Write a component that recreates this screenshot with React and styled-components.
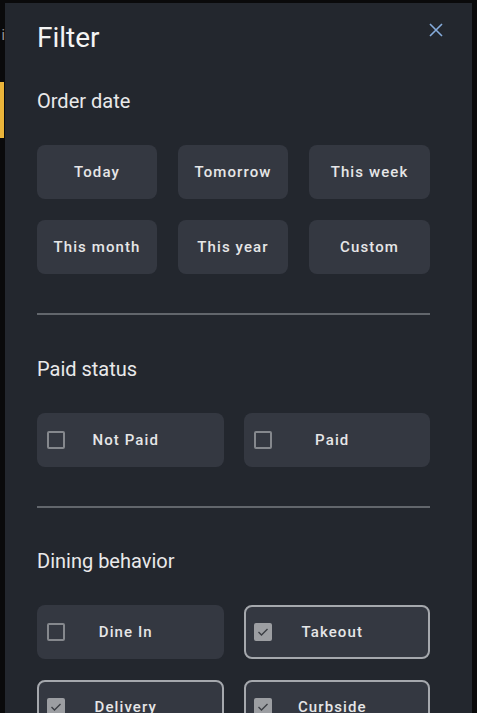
import React from "react";
import styled, { createGlobalStyle } from "styled-components";

const GlobalStyle = createGlobalStyle`
  html, body {
    margin: 0;
    padding: 0;
    background: #0a0a0b;
    overflow: hidden;
  }
  body {
    font-family: "Roboto", "Liberation Sans", sans-serif;
  }
`;

const Screen = styled.div`
  display: flex;
  height: 100vh;
  padding-top: 3px;
  box-sizing: border-box;
  background: #0a0a0b;
`;

const BehindStrip = styled.div`
  width: 5px;
  flex-shrink: 0;
  overflow: hidden;
  display: flex;
  flex-direction: column;
  padding-top: 24px;
`;

const BehindText = styled.span`
  color: #9a9a9a;
  font-size: 14px;
  line-height: 16px;
  text-align: right;
  white-space: nowrap;
  direction: rtl;
`;

const YellowBar = styled.div`
  margin-top: 39px;
  width: 4px;
  height: 56px;
  background: #eab43a;
`;

const Panel = styled.div`
  width: 467px;
  flex-shrink: 0;
  background: #23272e;
  padding: 18px 42px 0 32px;
  box-sizing: border-box;
  overflow: hidden;
`;

const Header = styled.div`
  display: flex;
  justify-content: space-between;
  align-items: flex-start;
`;

const Title = styled.h1`
  margin: 0;
  font-size: 28px;
  line-height: 34px;
  font-weight: 400;
  color: #f4f4f4;
`;

const CloseButton = styled.button`
  background: none;
  border: none;
  padding: 0;
  margin: 2px -13px 0 0;
  width: 14px;
  height: 14px;
  display: flex;
  cursor: pointer;
`;

const SectionTitle = styled.h2`
  margin: ${(p) => p.$top}px 0 32px;
  font-size: 20px;
  line-height: 24px;
  font-weight: 400;
  color: #e9e9ea;
`;

const DateGrid = styled.div`
  display: grid;
  grid-template-columns: 120px 110px 121px;
  gap: 21px;
`;

const ChipButton = styled.button`
  height: 54px;
  border: none;
  border-radius: 8px;
  background: #343841;
  color: #e6e6e7;
  font-family: "Roboto", "Liberation Sans", sans-serif;
  font-size: 15px;
  font-weight: 500;
  letter-spacing: 1.1px;
  cursor: pointer;
`;

const Divider = styled.hr`
  margin: 39px 0 0;
  border: none;
  height: 2px;
  background: #62666c;
`;

const CheckGrid = styled.div`
  display: grid;
  grid-template-columns: 1fr 1fr;
  gap: 21px 20px;
`;

const CheckOption = styled.label`
  height: 54px;
  box-sizing: border-box;
  display: flex;
  align-items: center;
  padding: 0 35px 0 8px;
  border-radius: 8px;
  background: #343841;
  border: 2px solid ${(p) => (p.$checked ? "#a5a8ad" : "transparent")};
  cursor: pointer;
`;

const Box = styled.span`
  width: 18px;
  height: 18px;
  box-sizing: border-box;
  flex-shrink: 0;
  border-radius: 2px;
  border: 2px solid ${(p) => (p.$checked ? "#9c9ea2" : "#85888d")};
  background: ${(p) => (p.$checked ? "#9c9ea2" : "transparent")};
  display: flex;
  align-items: center;
  justify-content: center;
`;

const OptionLabel = styled.span`
  flex: 1;
  text-align: center;
  color: #e6e6e7;
  font-size: 15px;
  font-weight: 500;
  letter-spacing: 1.1px;
`;

const CloseIcon = () => (
  <svg width="14" height="14" viewBox="0 0 14 14">
    <path d="M1 1L13 13M13 1L1 13" stroke="#86acdc" strokeWidth="1.6" />
  </svg>
);

const CheckMark = () => (
  <svg width="12" height="10" viewBox="0 0 12 10">
    <polyline points="1.5,5 4.5,8 10.5,2" fill="none" stroke="#3b3e44" strokeWidth="1.4" />
  </svg>
);

const Check = ({ label, checked }) => (
  <CheckOption $checked={checked}>
    <Box $checked={checked}>{checked && <CheckMark />}</Box>
    <OptionLabel>{label}</OptionLabel>
  </CheckOption>
);

const dates = ["Today", "Tomorrow", "This week", "This month", "This year", "Custom"];

export default function App() {
  return (
    <>
      <GlobalStyle />
      <Screen>
        <BehindStrip>
          <BehindText>i</BehindText>
          <YellowBar />
        </BehindStrip>
        <Panel>
          <Header>
            <Title>Filter</Title>
            <CloseButton aria-label="Close">
              <CloseIcon />
            </CloseButton>
          </Header>

          <SectionTitle $top={34}>Order date</SectionTitle>
          <DateGrid>
            {dates.map((d) => (
              <ChipButton key={d}>{d}</ChipButton>
            ))}
          </DateGrid>
          <Divider />

          <SectionTitle $top={42}>Paid status</SectionTitle>
          <CheckGrid>
            <Check label="Not Paid" />
            <Check label="Paid" />
          </CheckGrid>
          <Divider />

          <SectionTitle $top={41}>Dining behavior</SectionTitle>
          <CheckGrid>
            <Check label="Dine In" />
            <Check label="Takeout" checked />
            <Check label="Delivery" checked />
            <Check label="Curbside" checked />
          </CheckGrid>
        </Panel>
      </Screen>
    </>
  );
}
